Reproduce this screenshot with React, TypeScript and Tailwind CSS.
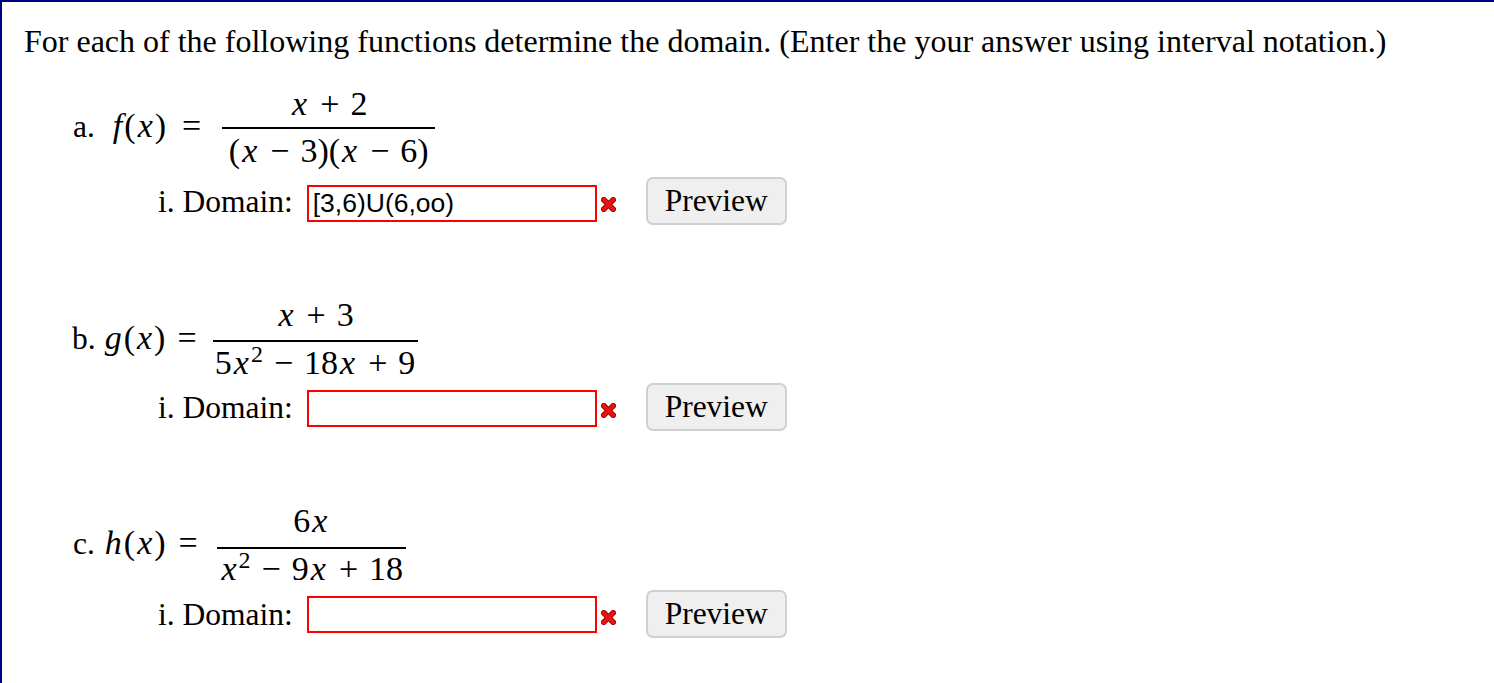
import React from 'react';

const I = ({ children }: { children: React.ReactNode }) => (
  <span className="italic px-[2px]">{children}</span>
);

const Op = ({ children }: { children: React.ReactNode }) => (
  <span className="px-[11px]">{children}</span>
);

const Sup = ({ children }: { children: React.ReactNode }) => (
  <span className="relative -top-[12px] text-[24px] leading-none">{children}</span>
);

interface FracProps {
  num: React.ReactNode;
  den: React.ReactNode;
  className: string;
  numClass: string;
  denClass: string;
}

const Frac: React.FC<FracProps> = ({ num, den, className, numClass, denClass }) => (
  <div className={`flex flex-col items-center text-[34px] ${className}`}>
    <div className={`leading-none whitespace-nowrap ${numClass}`}>{num}</div>
    <div className="h-[2px] w-full bg-black" />
    <div className={`leading-none whitespace-nowrap ${denClass}`}>{den}</div>
  </div>
);

const XMark = () => (
  <svg width="15" height="15" viewBox="0 0 15 15" className="shrink-0">
    <path d="M2.8 2.8 L12.2 12.2 M12.2 2.8 L2.8 12.2" stroke="#8a0000" strokeWidth="5.6" strokeLinecap="square" />
    <path d="M2.8 2.8 L12.2 12.2 M12.2 2.8 L2.8 12.2" stroke="#ee1111" strokeWidth="3.8" strokeLinecap="square" />
  </svg>
);

const DomainRow = ({ value, className, inputTop }: { value: string; className: string; inputTop: string }) => (
  <div className={`ml-[134px] flex items-start ${className}`}>
    <span className="mt-[9px] text-[31.5px] leading-none whitespace-nowrap">i. Domain:</span>
    <input
      readOnly
      value={value}
      className={`ml-[14px] h-[37px] w-[290px] border-2 border-[#ff0000] bg-white px-[4px] font-['Liberation_Sans',Arial,sans-serif] text-[26.5px] text-black outline-none ${inputTop}`}
    />
    <div className="ml-[4px] mt-[20px]">
      <XMark />
    </div>
    <button className="ml-[30px] h-[48px] w-[141px] rounded-[7px] border-2 border-[#d0d0d0] bg-[#efefef] text-[31.5px] leading-none text-black">
      Preview
    </button>
  </div>
);

export default function App() {
  return (
    <div className="h-[683px] w-full overflow-hidden border-l-2 border-t-2 border-[#000080] bg-white font-['Liberation_Serif','Times_New_Roman',serif] text-black">
      <div className="pl-[22px] pt-[23px]">
        <h1 className="text-[32px] font-normal leading-none whitespace-nowrap">
          For each of the following functions determine the domain. (Enter the your answer using interval notation.)
        </h1>

        {/* a */}
        <div className="mt-[30px] ml-[49px] flex items-start">
          <div className="mt-[22px] flex items-baseline">
            <span className="text-[31.5px] leading-none">a.</span>
            <span className="ml-[16px] text-[34px] leading-none whitespace-nowrap">
              <I>f</I>(<I>x</I>)
            </span>
            <span className="ml-[16px] text-[34px] leading-none">=</span>
          </div>
          <Frac
            className="ml-[21px] w-[213px]"
            numClass="pb-[6px]"
            denClass="pt-[5px]"
            num={<><I>x</I><Op>+</Op>2</>}
            den={<>(<I>x</I><Op>−</Op>3)(<I>x</I><Op>−</Op>6)</>}
          />
        </div>
        <DomainRow value="[3,6)U(6,oo)" className="mt-[9px]" inputTop="mt-[8px]" />

        {/* b */}
        <div className="mt-[73px] ml-[48px] flex items-start">
          <div className="mt-[23px] flex items-baseline">
            <span className="text-[31.5px] leading-none">b.</span>
            <span className="ml-[7px] text-[34px] leading-none whitespace-nowrap">
              <I>g</I>(<I>x</I>)
            </span>
            <span className="ml-[12px] text-[34px] leading-none">=</span>
          </div>
          <Frac
            className="ml-[16px] w-[205px]"
            numClass="pb-[8px]"
            denClass="pt-[4px]"
            num={<><I>x</I><Op>+</Op>3</>}
            den={<>5<I>x</I><Sup>2</Sup><Op>−</Op>18<I>x</I><Op>+</Op>9</>}
          />
        </div>
        <DomainRow value="" className="mt-[3px]" inputTop="mt-[7px]" />

        {/* c */}
        <div className="mt-[73px] ml-[49px] flex items-start">
          <div className="mt-[22px] flex items-baseline">
            <span className="text-[31.5px] leading-none">c.</span>
            <span className="ml-[8px] text-[34px] leading-none whitespace-nowrap">
              <I>h</I>(<I>x</I>)
            </span>
            <span className="ml-[13px] text-[34px] leading-none">=</span>
          </div>
          <Frac
            className="ml-[19px] w-[189px]"
            numClass="pb-[9px]"
            denClass="pt-[3px]"
            num={<>6<I>x</I></>}
            den={<><I>x</I><Sup>2</Sup><Op>−</Op>9<I>x</I><Op>+</Op>18</>}
          />
        </div>
        <DomainRow value="" className="mt-[4px]" inputTop="mt-[6px]" />
      </div>
    </div>
  );
}
